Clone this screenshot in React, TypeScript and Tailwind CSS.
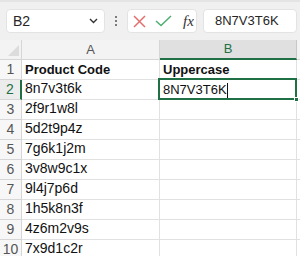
import React from "react";

const codes = [
  "8n7v3t6k",
  "2f9r1w8l",
  "5d2t9p4z",
  "7g6k1j2m",
  "3v8w9c1x",
  "9l4j7p6d",
  "1h5k8n3f",
  "4z6m2v9s",
  "7x9d1c2r",
];

const font = { fontFamily: '"Liberation Sans", Arial, sans-serif' };

export default function App() {
  return (
    <div className="w-[300px] h-[256px] overflow-hidden bg-white" style={font}>
      {/* formula bar */}
      <div className="h-[40px] bg-[#f0f0f0] border-t-2 border-[#e4e4e4] flex items-start pt-[7px] pl-[6px] pr-[3px]">
        <div className="w-[99px] h-[24px] bg-white rounded-[4px] border border-[#e3e3e3] flex items-center justify-between pl-[6px] pr-[6px]">
          <span className="text-[14px] text-[#262626]">B2</span>
          <svg width="9" height="6" viewBox="0 0 9 6">
            <path d="M1 1 L4.5 4.5 L8 1" fill="none" stroke="#333" strokeWidth="1.4" />
          </svg>
        </div>
        <div className="w-[22px] h-[24px] flex flex-col items-center justify-center gap-[2px]">
          <div className="w-[2px] h-[2px] bg-[#555] rounded-full" />
          <div className="w-[2px] h-[2px] bg-[#555] rounded-full" />
          <div className="w-[2px] h-[2px] bg-[#555] rounded-full" />
        </div>
        <div className="w-[70px] h-[24px] bg-white rounded-[4px] border border-[#e3e3e3] flex items-center pl-[5px] gap-[9px]">
          <svg width="13" height="13" viewBox="0 0 13 13">
            <path d="M1 1 L12 12 M12 1 L1 12" stroke="#e36f6f" strokeWidth="1.5" fill="none" />
          </svg>
          <svg width="17" height="12" viewBox="0 0 17 12">
            <path d="M1 6 L6 10.5 L16 1" stroke="#4fae72" strokeWidth="1.5" fill="none" />
          </svg>
          <span className="text-[15px] italic text-[#333] ml-[2px]" style={{ fontFamily: '"Liberation Serif", "Times New Roman", serif' }}>
            fx
          </span>
        </div>
        <div className="ml-[6px] flex-1 h-[24px] bg-white rounded-[4px] border border-[#e3e3e3] flex items-center pl-[11px]">
          <span className="text-[13px] text-[#262626]">8N7V3T6K</span>
        </div>
      </div>

      {/* grid */}
      <div className="grid grid-cols-[22px_138px_137px_1fr]">
        {/* header row */}
        <div className="h-[20px] bg-[#f3f3f3] border-r border-b border-[#d6d6d6] relative">
          <div className="absolute right-[2px] bottom-[3px] w-0 h-0 border-l-[11px] border-l-transparent border-b-[11px] border-b-[#dcdcdc]" />
        </div>
        <div className="h-[20px] bg-[#f3f3f3] border-r border-b border-[#d6d6d6] flex items-center justify-center text-[13px] text-[#555]">
          A
        </div>
        <div className="h-[20px] bg-[#e0e0e0] border-r border-[#c8c8c8] border-b-2 border-b-[#1f7145] flex items-center justify-center text-[13px] text-[#1f7145]">
          B
        </div>
        <div className="h-[20px] bg-[#f3f3f3] border-b border-[#d6d6d6]" />

        {/* row 1 */}
        <RowHead n={1} />
        <div className="h-[20px] border-r border-b border-[#e1e1e1] flex items-end pl-[3px] text-[13px] font-bold text-[#111]">
          Product Code
        </div>
        <div className="h-[20px] border-r border-b border-[#e1e1e1] flex items-end pl-[3px] text-[13px] font-bold text-[#111]">
          Uppercase
        </div>
        <div className="h-[20px] border-b border-[#e1e1e1]" />

        {codes.map((c, i) => (
          <React.Fragment key={c}>
            <RowHead n={i + 2} active={i === 0} />
            <div className="h-[20px] border-r border-b border-[#e1e1e1] flex items-end pl-[3px] text-[14px] text-[#111]">
              {c}
            </div>
            {i === 0 ? (
              <div className="h-[20px] border-r border-b border-[#e1e1e1] relative flex items-end pl-[3px] text-[13px] text-[#111]">
                <span>8N7V3T6K</span>
                <span className="w-[1px] h-[15px] bg-[#111] mb-[1px]" />
                <div className="absolute left-[-2px] top-[-2px] right-[-1px] bottom-[-1px] border-2 border-[#1f7145]" />
                <div className="absolute right-[-3px] bottom-[-3px] w-[5px] h-[5px] bg-[#1f7145] border border-white" />
              </div>
            ) : (
              <div className="h-[20px] border-r border-b border-[#e1e1e1]" />
            )}
            <div className="h-[20px] border-b border-[#e1e1e1]" />
          </React.Fragment>
        ))}
      </div>
    </div>
  );
}

function RowHead({ n, active }: { n: number; active?: boolean }) {
  return (
    <div
      className={
        active
          ? "h-[20px] bg-[#ececec] border-r-2 border-r-[#1f7145] border-b border-b-[#d6d6d6] flex items-center justify-center text-[14px] text-[#1f7145]"
          : "h-[20px] bg-[#f7f7f7] border-r border-b border-[#d6d6d6] flex items-center justify-center text-[14px] text-[#555]"
      }
    >
      {n}
    </div>
  );
}
